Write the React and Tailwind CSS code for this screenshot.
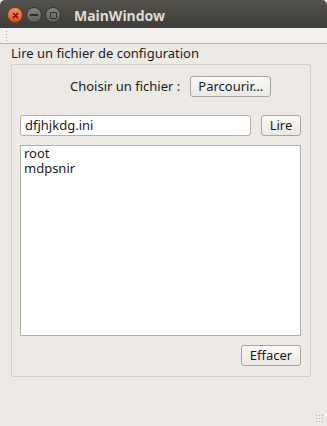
import React from "react";

function WinButton({ kind }) {
  if (kind === "close") {
    return (
      <div className="w-[16px] h-[16px] rounded-full bg-gradient-to-b from-[#f7905f] to-[#df4a17] border border-[#8a3614] flex items-center justify-center">
        <svg width="7" height="7" viewBox="0 0 7 7">
          <path d="M1 1L6 6M6 1L1 6" stroke="#3a1a0c" strokeWidth="1.2" />
        </svg>
      </div>
    );
  }
  return (
    <div className="w-[16px] h-[16px] rounded-full bg-gradient-to-b from-[#85837d] to-[#5f5d58] border border-[#34332f] flex items-center justify-center">
      {kind === "min" ? (
        <div className="w-[8px] h-[2px] bg-[#2f2e2a]" />
      ) : (
        <div className="w-[7px] h-[7px] border border-[#2f2e2a] rounded-[1px]" />
      )}
    </div>
  );
}

function QtButton({ children, className = "" }) {
  return (
    <button
      className={
        "h-[21px] px-[7px] rounded-[3px] border border-[#a9a6a2] bg-gradient-to-b from-[#fbfaf9] to-[#ebe9e6] text-[13px] leading-none text-[#1c1c1c] " +
        className
      }
    >
      {children}
    </button>
  );
}

export default function App() {
  return (
    <div
      className="w-[327px] h-[426px] bg-[#edeae6] flex flex-col overflow-hidden text-[#1c1c1c]"
      style={{ fontFamily: '"Noto Sans", "DejaVu Sans", sans-serif' }}
    >
      <div className="h-[28px] rounded-t-[5px] bg-gradient-to-b from-[#55534e] to-[#3d3c38] flex items-center pl-[7px] pt-[2px] shrink-0">
        <div className="flex items-center gap-[3px]">
          <WinButton kind="close" />
          <WinButton kind="min" />
          <WinButton kind="max" />
        </div>
        <span className="ml-[13px] text-[14px] font-bold text-[#dfdbd2]">MainWindow</span>
      </div>

      <div className="h-[16px] bg-[#f2f1ef] border-b border-[#b9b6b1] flex items-center pl-[5px] shrink-0">
        <div className="w-[3px] h-[12px] bg-[radial-gradient(#a7a49f_1px,transparent_1px)] bg-[length:3px_3px]" />
      </div>

      <div className="flex-1 flex flex-col px-[11px]">
        <div className="text-[13px] leading-[18px]">Lire un fichier de configuration</div>
        <div className="mt-[2px] w-[300px] h-[313px] border border-[#d4d0cb] rounded-[2px] flex flex-col px-[8px] pt-[11px]">
          <div className="flex items-center gap-[10px] pl-[50px]">
            <span className="text-[13px]">Choisir un fichier :</span>
            <QtButton>Parcourir...</QtButton>
          </div>
          <div className="mt-[18px] flex items-center gap-[10px]">
            <div className="w-[231px] h-[21px] bg-white border border-[#b4b0ab] rounded-[3px] flex items-center px-[4px] text-[13px]">
              dfjhjkdg.ini
            </div>
            <QtButton className="w-[40px]">Lire</QtButton>
          </div>
          <div className="mt-[9px] w-[281px] h-[191px] bg-white border border-[#b4b0ab] px-[3px] text-[13px] leading-[15px]">
            <div>root</div>
            <div>mdpsnir</div>
          </div>
          <div className="mt-[9px] flex justify-end pr-[1px]">
            <QtButton className="w-[60px]">Effacer</QtButton>
          </div>
        </div>
        <div className="flex-1 flex justify-end items-end pb-[2px] -mr-[9px]">
          <div className="w-[10px] h-[10px] bg-[radial-gradient(#b1aea9_1px,transparent_1px)] bg-[length:3px_3px]" />
        </div>
      </div>
    </div>
  );
}
